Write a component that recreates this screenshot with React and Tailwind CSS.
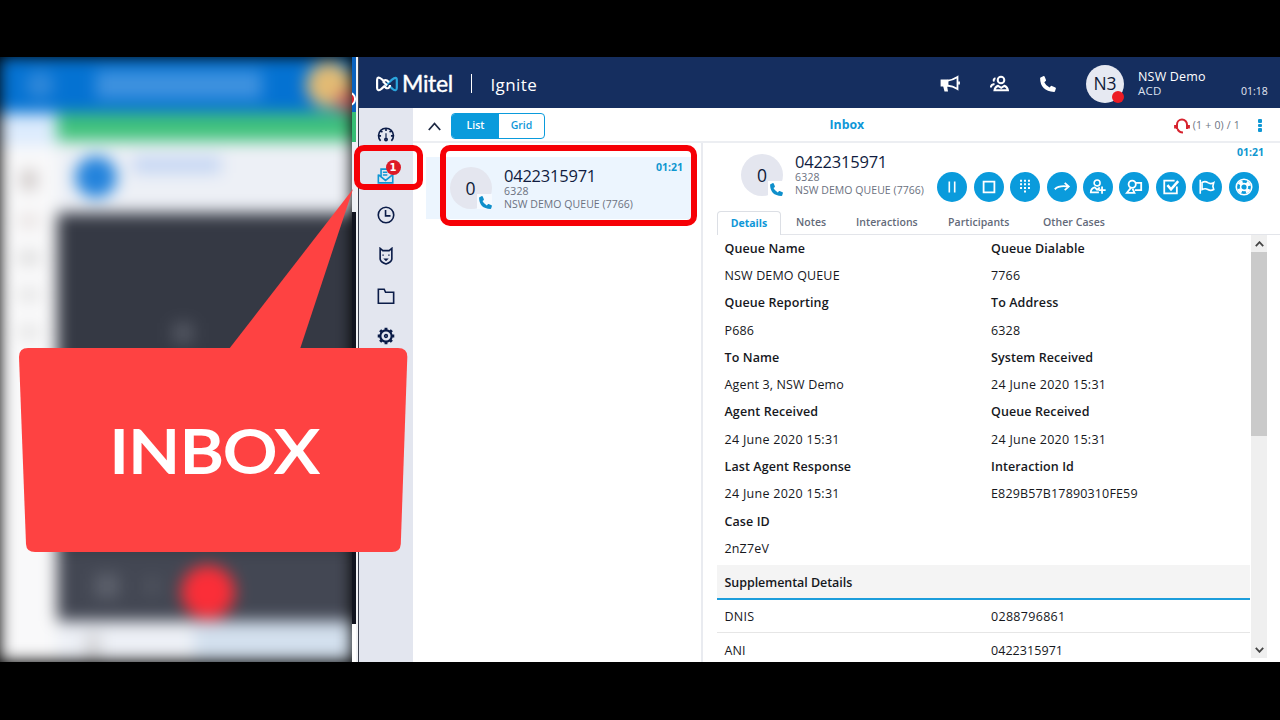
import React from "react";
import clsx from "clsx";

const Svg = ({ children, className, viewBox = "0 0 20 20" }) => (
  <svg
    viewBox={viewBox}
    className={className}
    fill="none"
    stroke="currentColor"
    strokeWidth="1.8"
  >
    {children}
  </svg>
);

const PhoneIcon = ({ className }) => (
  <svg viewBox="0 0 16 16" className={className} fill="currentColor">
    <path d="M.6 1.4 3.6.1Q4.300 0 4.600.6L6 4q.2.6-.3 1.100L4.300 6.300q1.500 3.500 5.300 5.300l1.300-1.500q.4-.5 1-.2l3.500 1.500q.6.300.5 1l-.9 2.900q-.2.600-.9.600Q.2 15.300.1 2.100.1 1.600.6 1.400z" />
  </svg>
);

const MitelLogo = () => (
  <svg viewBox="0 0 22 16" className="h-4 w-[22px]" fill="none" strokeWidth="2.200">
    <path d="m9 10 7-6.300q4.600-3.700 4.800.3v8q-.2 4-4.300.8L13.300 10" stroke="#2ba6de" />
    <path
      d="m13 6.300-2-1.800Q8 3.500 7.500 6L11 9.500M8.800 5.900 5.500 3Q1.300-.2 1.100 4v8q.2 4 4.300.8L9 9.700M9 10q.5 3 3.500 2 1.500-1 1.500-3"
      stroke="#fff"
    />
  </svg>
);

const Header = () => (
  <header className="flex h-[51px] shrink-0 items-center bg-[#152e5f] pt-0.5 pl-[17px] text-white">
    <div className="flex items-center gap-[4px]">
      <MitelLogo />
      <span className="font-['Lato'] text-[23px] leading-none tracking-[-0.3px] [-webkit-text-stroke:0.4px_#fff]">
        Mitel
      </span>
    </div>
    <div className="ml-[18px] h-[19px] w-px bg-white" />
    <span className="ml-[18.500px] pt-0.5 text-[17px] leading-none tracking-[0.4px]">Ignite</span>
    <div className="ml-auto flex items-center">
      <Svg className="h-[18px] w-5" viewBox="0 0 20 18">
        <path d="M1.500 5.500h6v5h-6z" fill="currentColor" />
        <path d="M7 5.800Q13 5 17.500 2v12q-4.500-3-10.500-3.500" />
        <path d="M3 10.500h4l1 6H4.500z" fill="currentColor" stroke="none" />
        <path d="M19 6.500v3" />
      </Svg>
      <Svg className="ml-[30px] h-[18px] w-[19px]" viewBox="0 0 19 18">
        <circle cx="11" cy="5" r="3.300" strokeWidth="2" />
        <path
          d="M4.500 15.200h13.400q-.5-3.200-3.600-4.400l-3.100 2-3.100-2Q5 12 4.500 15.200zM5.500 3.200Q3 3.800 4 6.500M.8 12.500Q1 9.500 4.500 9"
          strokeWidth="2"
        />
      </Svg>
      <PhoneIcon className="ml-[31px] h-4 w-4" />
      <div className="relative ml-[30px] flex h-[38px] w-[38px] items-center justify-center rounded-full bg-[#e6e9f2] text-[17.500px] text-[#0e1a38]">
        N3
        <span className="absolute right-0 bottom-0 h-[12px] w-[12px] rounded-full bg-[#ed1c24]" />
      </div>
      <div className="ml-[14px] w-[103px]">
        <div className="text-[12.500px] leading-[14px] tracking-[0.2px]">NSW Demo</div>
        <div className="text-[11.500px] leading-[14px] tracking-[0.2px] text-[#dbe1ef]">ACD</div>
      </div>
      <span className="mr-3 w-[27px] pt-4 text-[10.500px] leading-none text-[#e5e9f3]">01:18</span>
    </div>
  </header>
);

const NavItem = ({ children }) => (
  <div className="relative flex h-[40.200px] w-full items-center justify-center">{children}</div>
);

const Sidebar = () => (
  <nav className="flex w-[54px] shrink-0 flex-col items-center bg-[#e3e6ef] pt-[7px] text-[#0b1c48]">
    <NavItem>
      <Svg className="h-[18px] w-[18px]">
        <path d="M4 16.500a8.300 8.300 0 1 1 12 0M10 2.500v3M4 5l2 2M16 5l-2 2M2 11h2.500M18 11h-2.500" />
        <path d="M10 8v5" strokeWidth="1.300" />
        <circle cx="10" cy="15" r="1.300" />
      </Svg>
    </NavItem>
    <NavItem>
      <Svg className="h-[18px] w-[18px] text-[#0f97d4]">
        <path d="M1.500 9.500v9.300h16V9.500M1.500 9.500l8 6.500 8-6.500M4.500 11.500V3.500h9M6.500 7h5M6.500 10h5" />
      </Svg>
      <span className="absolute top-[5px] left-[26.500px] flex h-[15px] w-[15px] items-center justify-center rounded-full bg-[#dd1a26] font-['DejaVu_Sans'] text-[10px] font-bold text-white">
        1
      </span>
    </NavItem>
    <NavItem>
      <Svg className="h-[18px] w-[18px]">
        <circle cx="10" cy="10" r="8.600" />
        <path d="M9.500 4.500V11H15" />
      </Svg>
    </NavItem>
    <NavItem>
      <Svg className="h-[18px] w-[18px]">
        <path d="M3.500 1.500 6.500 4h7l3-2.500v12Q16 17 10 18.800 4 17 3.500 13.500z" />
        <path d="M6 9h1.500M12.500 9H14M8.500 13.500h3L10 15z" strokeWidth="1.300" />
      </Svg>
    </NavItem>
    <NavItem>
      <Svg className="h-[18px] w-[18px]">
        <path d="M1.500 2.500H8l1.500 3.300h9V18h-17z" />
      </Svg>
    </NavItem>
    <NavItem>
      <Svg className="h-[18px] w-[18px]">
        <circle cx="10" cy="10" r="6.300" strokeWidth="2.400" />
        <circle cx="10" cy="10" r="1.500" />
        <path
          d="M10 .8V4M10 16v3.200M.8 10H4M16 10h3.200M3.500 3.500l2.200 2.200M14.300 14.300l2.200 2.200M3.500 16.500l2.200-2.200M14.300 5.700l2.200-2.200"
          strokeWidth="3.200"
        />
      </Svg>
    </NavItem>
  </nav>
);

const Toolbar = () => (
  <div className="relative flex h-[35px] shrink-0 items-center border-b-2 border-[#eceef2] pl-[15px]">
    <Svg className="mt-1 h-[9px] w-[13px] text-[#1f2a44]" viewBox="0 0 13 9">
      <path d="M.8 8 6.500 1.500 12.200 8" />
    </Svg>
    <div className="mt-0.5 ml-[10px] flex h-[26px] w-[94px] overflow-hidden rounded-[4px] border border-[#0a9bdc] text-[10.500px] font-semibold">
      <span className="flex w-[47px] items-center justify-center bg-[#0a9bdc] text-white">List</span>
      <span className="flex flex-1 items-center justify-center text-[#0f97d8]">Grid</span>
    </div>
    <span className="absolute top-[9px] left-[416.500px] text-[12.300px] leading-4 font-bold text-[#0f97d8]">
      Inbox
    </span>
    <div className="mt-0.5 mr-[18px] ml-auto flex items-center">
      <Svg className="h-4 w-4 text-[#d7232e]" viewBox="0 0 16 16">
        <path d="M3 11V6.500a5 5 0 0 1 10 0V11M3.500 11q1.500 3.500 5.500 3.500" strokeWidth="2" />
        <path d="M1.400 7v3.500M14.600 7v3.500" strokeWidth="2.600" />
      </Svg>
      <span className="ml-[3px] text-[10.500px] tracking-[0.200px] text-[#6d7482]">(1 + 0) / 1</span>
      <div className="ml-[18px] flex flex-col gap-px">
        <span className="h-[3.500px] w-[4px] rounded-[1px] bg-[#0f97d4]" />
        <span className="h-[3.500px] w-[4px] rounded-[1px] bg-[#0f97d4]" />
        <span className="h-[3.500px] w-[4px] rounded-[1px] bg-[#0f97d4]" />
      </div>
    </div>
  </div>
);

const CallAvatar = ({ notch }) => (
  <div className="relative flex h-[42px] w-[42px] shrink-0 items-center justify-center rounded-full bg-[#e4e6ef] text-[17.500px] text-[#0e1a38]">
    0
    <span className={clsx("absolute right-0 bottom-0 h-[15px] w-[15px]", notch)} />
    <PhoneIcon className="absolute right-0 bottom-0 h-[13px] w-[13px] text-[#0f8fcb]" />
  </div>
);

const CallSummary = () => (
  <div className="whitespace-nowrap text-[#6b7180]">
    <div className="text-[16.500px] leading-[18px] tracking-[-0.230px] text-[#101c40]">0422315971</div>
    <div className="text-[10.500px] leading-[13px] tracking-[0.200px]">6328</div>
    <div className="text-[10.500px] leading-[13px] tracking-[0.050px]">NSW DEMO QUEUE (7766)</div>
  </div>
);

const InboxList = () => (
  <div className="w-[290px] shrink-0 border-r-2 border-[#e9ebf0] pt-[14px] pl-[13px]">
    <div className="flex h-[62px] w-[269px] bg-[#ecf5fe] pt-[10px] pl-[23.500px]">
      <CallAvatar notch="bg-[#f6faff]" />
      <div className="ml-[12.500px]">
        <CallSummary />
      </div>
      <span className="mr-3 ml-auto -mt-[7px] text-[10.500px] leading-[14px] font-bold text-[#0f97d0]">
        01:21
      </span>
    </div>
  </div>
);

const ACTIONS = [
  { name: "hold", icon: <path d="M7 4v12M13 4v12" /> },
  { name: "end", icon: <path d="M4 4h12v12H4z" strokeWidth="2" /> },
  {
    name: "keypad",
    icon: (
      <path
        d="M4.500 3h2.200M8.900 3h2.200M13.300 3h2.200M4.500 7h2.200M8.900 7h2.200M13.300 7h2.200M4.500 11h2.200M8.900 11h2.200M13.300 11h2.200M8.900 15h2.200"
        strokeWidth="2.200"
      />
    ),
  },
  { name: "transfer", icon: <path d="M2 12.500Q6.500 8 17 9.500M13 5.500l4.500 4-4.500 4" strokeWidth="2" /> },
  {
    name: "addAgent",
    icon: (
      <>
        <circle cx="9" cy="5.500" r="3.300" />
        <path d="M11 16H2q0-4.500 4.500-5.500L9 13l3-2.500M14.500 9.500v8M10.500 13.500h8" strokeWidth="2" />
      </>
    ),
  },
  {
    name: "tag",
    icon: (
      <>
        <circle cx="8" cy="7" r="4" strokeWidth="2" />
        <path d="M6.500 11 2 16.500h8.500L8.500 12M12 5.500h6v8h-7" strokeWidth="2" />
      </>
    ),
  },
  {
    name: "accountCode",
    icon: (
      <>
        <path d="M16.500 9.500V17h-14V3H14" strokeWidth="2" />
        <path d="m6 8 4 4.500L18 3.500" strokeWidth="2.800" />
      </>
    ),
  },
  {
    name: "flag",
    icon: (
      <path d="M2.500 2v15.500M4.500 5Q8 3 11 5.200q3 2 6.500 0l-1 4 1 3.600q-3.500 2-6.500 0-3-1.800-6.500 0z" />
    ),
  },
  {
    name: "help",
    icon: (
      <>
        <circle cx="10" cy="10" r="8.600" />
        <circle cx="10" cy="10" r="3.800" />
        <circle
          cx="10"
          cy="10"
          r="6"
          strokeWidth="3.600"
          strokeDasharray="4.700 4.725"
          strokeDashoffset="-2.350"
        />
      </>
    ),
  },
];

const FIELDS = [
  ["Queue Name", "NSW DEMO QUEUE", "Queue Dialable", "7766"],
  ["Queue Reporting", "P686", "To Address", "6328"],
  ["To Name", "Agent 3, NSW Demo", "System Received", "24 June 2020 15:31"],
  ["Agent Received", "24 June 2020 15:31", "Queue Received", "24 June 2020 15:31"],
  ["Last Agent Response", "24 June 2020 15:31", "Interaction Id", "E829B57B17890310FE59"],
  ["Case ID", "2nZ7eV"],
];

const Field = ({ label, value }) => (
  <div className="leading-[27.300px]">
    <div className="font-semibold tracking-[0.100px]">{label}</div>
    <div className={clsx(value.includes(":") ? "tracking-[0.280px]" : "tracking-[0.150px]")}>
      {value}
    </div>
  </div>
);

const Scrollbar = () => (
  <div className="ml-px flex h-[423px] w-4 flex-col items-center bg-[#efefef]">
    <div className="flex h-[17px] items-center">
      <Svg className="h-[6px] w-[9px] text-[#454545]" viewBox="0 0 9 6">
        <path d="M.8 5.200 4.500 1.200 8.200 5.200" />
      </Svg>
    </div>
    <div className="h-[184px] w-full bg-[#cacaca]" />
    <div className="mt-auto flex h-[17px] items-center">
      <Svg className="h-[6px] w-[9px] text-[#454545]" viewBox="0 0 9 6">
        <path d="M.8.800 4.500 4.800 8.200.8" />
      </Svg>
    </div>
  </div>
);

const Details = () => (
  <section className="flex min-w-0 flex-1 flex-col pl-[14px]">
    <div className="flex h-[68px] shrink-0 pt-[10px] pl-6">
      <div className="pt-px">
        <CallAvatar notch="bg-white" />
      </div>
      <div className="ml-[12px]">
        <CallSummary />
      </div>
      <div className="mt-[19px] ml-auto flex gap-[6.400px]">
        {ACTIONS.map((a) => (
          <span
            key={a.name}
            className="flex h-[30px] w-[30px] items-center justify-center rounded-full bg-[#0a9bdc] text-white"
          >
            <Svg className="h-[18px] w-[18px]">{a.icon}</Svg>
          </span>
        ))}
      </div>
      <span className="-mt-[8px] mr-4 -ml-[21.500px] w-[27px] text-[10.500px] leading-[14px] font-bold text-[#0f97d0]">
        01:21
      </span>
    </div>
    <div className="flex h-6 shrink-0 items-stretch border-b border-[#e3e5ea] text-[10.500px] font-semibold text-[#636a79]">
      <span className="-mb-px flex w-[64px] items-center justify-center rounded-t-[4px] border border-b-0 border-[#dcdfe5] bg-white font-bold text-[#0f97d8]">
        Details
      </span>
      <div className="ml-[15px] grid grid-cols-[60px_92px_95px_auto] items-center tracking-[0.050px]">
        <span>Notes</span>
        <span>Interactions</span>
        <span>Participants</span>
        <span>Other Cases</span>
      </div>
    </div>
    <div className="flex min-h-0 flex-1 overflow-hidden text-[12.500px] text-[#16181d]">
      <div className="w-[533px] shrink-0">
        <div className="-mt-[0.300px] h-[330.300px] pl-[7.500px]">
          {FIELDS.map(([l1, v1, l2, v2]) => (
            <div key={l1} className="grid grid-cols-[266.500px_1fr]">
              <Field label={l1} value={v1} />
              {l2 && <Field label={l2} value={v2} />}
            </div>
          ))}
        </div>
        <div className="flex h-[35px] items-center border-b-2 border-[#1c9ddb] bg-[#f4f4f4] pt-[3px] pl-[7.500px] font-semibold tracking-[-0.050px]">
          Supplemental Details
        </div>
        <div className="grid h-[33px] grid-cols-[266.500px_1fr] items-center border-b border-[#e6e6e6] pt-[2px] pl-[7.500px] tracking-[0.300px]">
          <span>DNIS</span>
          <span>0288796861</span>
        </div>
        <div className="grid h-[34px] grid-cols-[266.500px_1fr] items-center pt-[2px] pl-[7.500px] tracking-[0.060px]">
          <span>ANI</span>
          <span>0422315971</span>
        </div>
      </div>
      <Scrollbar />
    </div>
  </section>
);

// Softphone window, kept out of focus behind the callout
const BlurredPhone = () => (
  <div className="w-[352px] shrink-0 overflow-hidden">
    <div className="flex h-[604px] flex-col bg-[#f4f5f8] blur-[8px]">
      <div className="flex h-[56px] shrink-0 items-center bg-[#0472d2]">
        <div className="ml-[26px] h-7 w-7 rounded-full bg-[#3088da]" />
        <div className="ml-[42px] h-7 w-[166px] bg-[#3f92df]" />
        <div className="relative ml-[44px] h-[46px] w-[46px] rounded-full bg-[#e2bb74]">
          <span className="absolute -right-1 -bottom-1 h-5 w-5 rounded-full bg-[#c85a5c]" />
        </div>
      </div>
      <div className="flex flex-1">
        <div className="flex w-[57px] shrink-0 flex-col items-center gap-[25px] bg-[#f9f9fa]">
          <div className="h-[32px] w-full bg-[#dcebfd]" />
          <div className="h-5 w-4 bg-[#cfc9c8]" />
          <div className="h-3 w-5 bg-[#e6e0df]" />
          <div className="h-3 w-5 bg-[#d8d8d8]" />
          <div className="h-3 w-5 bg-[#e2e2e2]" />
          <div className="h-3 w-5 bg-[#e2e2e2]" />
        </div>
        <div className="flex flex-1 flex-col bg-[#edf0f6]">
          <div className="h-7 bg-[#40c27c]" />
          <div className="flex h-[72px]">
            <div className="mt-[15px] ml-[18px] h-[42px] w-[42px] rounded-full bg-[#2383dc]" />
            <div className="mt-4 ml-4 h-4 w-[88px] bg-[#c3d5f3]" />
          </div>
          <div className="flex h-[408px] flex-col bg-[#353944]">
            <div className="mt-[110px] ml-[116px] h-5 w-5 bg-[#545863]" />
            <div className="mt-auto flex h-[70px] w-full items-center gap-[25px] bg-[#434753] pl-[38px]">
              <div className="h-6 w-6 bg-[#5d616c]" />
              <div className="h-4 w-4 bg-[#50545f]" />
              <div className="mt-3 -ml-1 h-[54px] w-[54px] shrink-0 rounded-full bg-[#fb2e38]" />
            </div>
          </div>
          <div className="flex flex-1">
            <div className="mt-3 ml-7 w-4 bg-[#d4d5d8]" />
            <div className="ml-[93px] flex-1 bg-[#d3e0ee]" />
          </div>
        </div>
      </div>
    </div>
  </div>
);

const PhoneEdge = () => (
  <div className="relative flex w-[6px] shrink-0 flex-col overflow-hidden border-r-2 border-[#f2f3f5] bg-white">
    <div className="h-[55px] bg-[#0b62bd]" />
    <div className="h-[30px] bg-[#36bd74]" />
    <div className="h-[70px] bg-[#eef0f5]" />
    <div className="h-[412px] bg-[#11141f]" />
    <span className="absolute top-[35px] -left-[9px] h-[14px] w-[13px] rounded-full border-2 border-white bg-[#d9202b]" />
  </div>
);

const Callout = () => (
  <>
    <svg viewBox="0 0 420 370" className="absolute top-[188px] left-0 h-[370px] w-[420px]" fill="#fe4242">
      <path d="M353 1 229 161h71z" />
      <path d="M28 160h370q9.500 0 9.300 9l-6.500 187q-.5 8-8.800 8H35q-8.600 0-9-8L19 169q0-9 9-9z" />
    </svg>
    <div className="absolute top-[347.500px] left-[20px] flex h-[204px] w-[388px] items-center justify-center font-['Lato'] text-[60px] leading-none text-white [-webkit-text-stroke:2px_#fff]">
      <span className="origin-center scale-x-[1.12]">INBOX</span>
    </div>
  </>
);

export default function App() {
  return (
    <div className="relative h-[720px] w-[1280px] overflow-hidden bg-black pt-[57px] font-['Open_Sans',sans-serif]">
      <div className="flex h-[605px] overflow-hidden">
        <BlurredPhone />
        <PhoneEdge />
        <div className="flex min-w-0 flex-1 flex-col border-l border-[#3a3f4d] bg-white">
          <Header />
          <div className="flex min-h-0 flex-1">
            <Sidebar />
            <main className="flex min-w-0 flex-1 flex-col">
              <Toolbar />
              <div className="flex min-h-0 flex-1">
                <InboxList />
                <Details />
              </div>
            </main>
          </div>
        </div>
      </div>
      <div className="absolute top-[145px] left-[354px] h-[45px] w-[69px] rounded-[10px] border-6 border-[#f60006]" />
      <div className="absolute top-[145px] left-[440px] h-[81px] w-[257px] rounded-[10px] border-6 border-[#f60006]" />
      <Callout />
    </div>
  );
}
